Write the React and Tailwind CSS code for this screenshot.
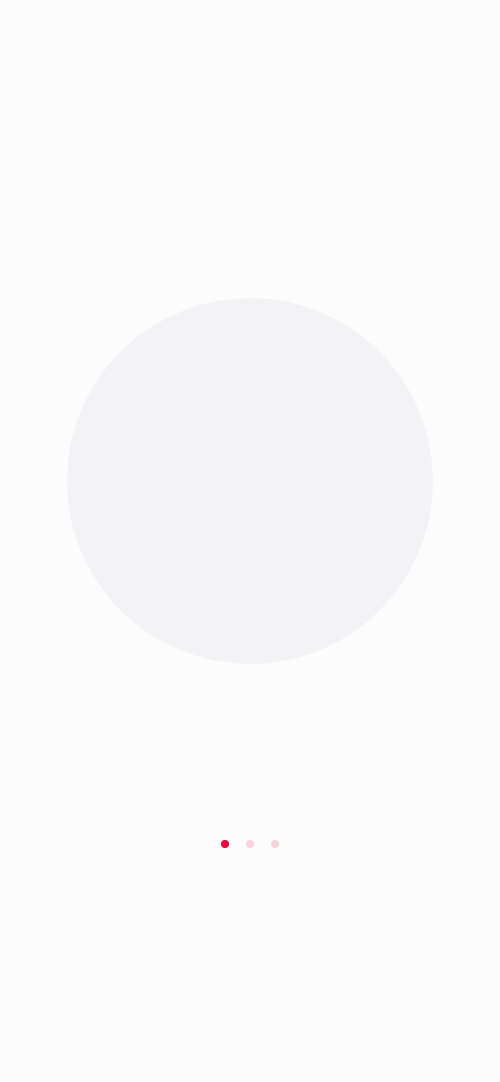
export default function App() {
  return (
    <div className="min-h-[1082px] w-full bg-[#fdfcfd] flex flex-col items-center pt-[298px]" style={{ fontFamily: '"Liberation Sans", sans-serif' }}>
      <div className="w-[366px] h-[366px] rounded-full bg-[#f3f2f4]" />
      <div className="mt-[176px] flex items-center gap-[17px]">
        <span className="block w-2 h-2 rounded-full bg-[#e2073d]" />
        <span className="block w-2 h-2 rounded-full bg-[#f7d3da]" />
        <span className="block w-2 h-2 rounded-full bg-[#f7d3da]" />
      </div>
    </div>
  );
}
